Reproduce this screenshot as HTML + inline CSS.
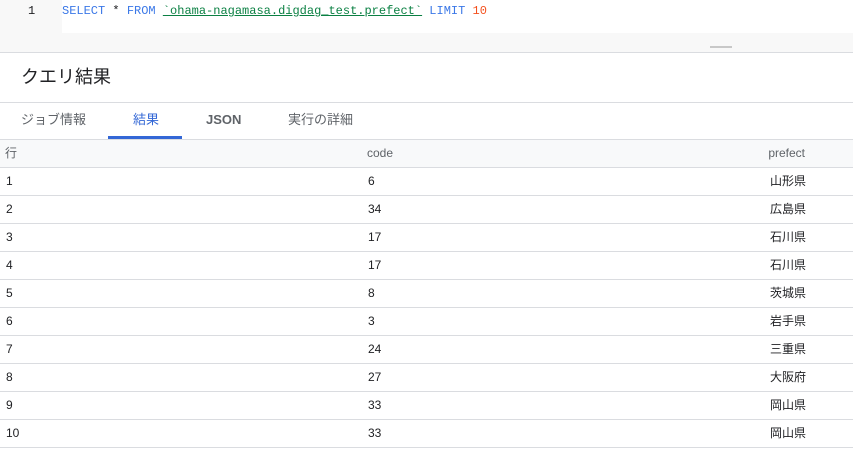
<!DOCTYPE html>
<html><head><meta charset="utf-8"><style>
*{margin:0;padding:0;box-sizing:border-box}
body{width:853px;height:453px;overflow:hidden;background:#fff;font-family:"Liberation Sans","Noto Sans CJK JP",sans-serif;color:#202124;position:relative}
.abs{position:absolute}
.mono{font-family:"Liberation Mono",monospace;font-size:12px}
.row{position:absolute;left:0;width:853px;height:28px;border-bottom:1px solid #dadce0;font-size:12px}
.row span{position:absolute;top:0;height:27px;line-height:27px}
.tab{position:absolute;top:110px;height:20px;line-height:20px;font-size:13px;color:#5f6368}
</style></head><body>
<div class="abs" style="left:0;top:0;width:853px;height:53px;background:#f8f8f8;border-bottom:1px solid #dadce0"></div>
<div class="abs" style="left:62px;top:0;width:791px;height:33px;background:#fff"></div>
<div class="abs mono" style="left:28px;top:3px;line-height:16px;color:#202124">1</div>
<div class="abs mono" style="left:62px;top:3px;line-height:16px;white-space:pre"><span style="color:#3b78e7">SELECT</span> * <span style="color:#3b78e7">FROM</span> <span style="color:#0b8043;text-decoration:underline">`ohama-nagamasa.digdag_test.prefect`</span> <span style="color:#3b78e7">LIMIT</span> <span style="color:#f4511e">10</span></div>
<div class="abs" style="left:710px;top:46px;width:22px;height:2px;background:#c8c8c8"></div>
<div class="abs" style="left:21px;top:65px;font-size:18px;line-height:24px">クエリ結果</div>
<div class="abs" style="left:0;top:102px;width:853px;border-top:1px solid #dadce0"></div>
<div class="tab" style="left:21px">ジョブ情報</div>
<div class="tab" style="left:133px;color:#3367d6">結果</div>
<div class="tab" style="left:206px;font-weight:bold">JSON</div>
<div class="tab" style="left:288px">実行の詳細</div>
<div class="abs" style="left:108px;top:136px;width:74px;height:3px;background:#3367d6"></div>
<div class="row" style="top:139px;background:#f8f9fa;border-top:1px solid #dadce0;height:29px;color:#5f6368"><span style="left:5px">行</span><span style="left:367px">code</span><span style="right:48px">prefect</span></div>
<div class="row" style="top:168px"><span style="left:6px">1</span><span style="left:368px">6</span><span style="right:47px">山形県</span></div>
<div class="row" style="top:196px"><span style="left:6px">2</span><span style="left:368px">34</span><span style="right:47px">広島県</span></div>
<div class="row" style="top:224px"><span style="left:6px">3</span><span style="left:368px">17</span><span style="right:47px">石川県</span></div>
<div class="row" style="top:252px"><span style="left:6px">4</span><span style="left:368px">17</span><span style="right:47px">石川県</span></div>
<div class="row" style="top:280px"><span style="left:6px">5</span><span style="left:368px">8</span><span style="right:47px">茨城県</span></div>
<div class="row" style="top:308px"><span style="left:6px">6</span><span style="left:368px">3</span><span style="right:47px">岩手県</span></div>
<div class="row" style="top:336px"><span style="left:6px">7</span><span style="left:368px">24</span><span style="right:47px">三重県</span></div>
<div class="row" style="top:364px"><span style="left:6px">8</span><span style="left:368px">27</span><span style="right:47px">大阪府</span></div>
<div class="row" style="top:392px"><span style="left:6px">9</span><span style="left:368px">33</span><span style="right:47px">岡山県</span></div>
<div class="row" style="top:420px"><span style="left:6px">10</span><span style="left:368px">33</span><span style="right:47px">岡山県</span></div>
</body></html>
